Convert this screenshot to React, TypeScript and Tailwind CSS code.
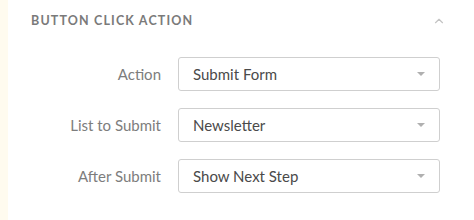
import { ChevronUp } from 'lucide-react'

const fields = [
  { label: 'Action', value: 'Submit Form' },
  { label: 'List to Submit', value: 'Newsletter' },
  { label: 'After Submit', value: 'Show Next Step' },
]

function Caret() {
  return (
    <svg width="8" height="4" viewBox="0 0 8 4" className="shrink-0">
      <path d="M0 0 L8 0 L4 4 Z" fill="#b0b0b0" />
    </svg>
  )
}

export default function App() {
  return (
    <div className="flex h-[220px] w-[474px] bg-white" style={{ fontFamily: 'Lato, "Open Sans", sans-serif' }}>
      <div className="w-[8px] shrink-0 bg-[#fffbef]" />
      <div className="flex-1">
        <div className="flex h-[42px] items-center justify-between pl-[23px] pr-[28px]">
          <span className="pt-[1px] text-[12.5px] font-bold tracking-[1.15px] text-[#7a7a7a]">BUTTON CLICK ACTION</span>
          <ChevronUp size={14} strokeWidth={2} className="text-[#c4c4c4]" />
        </div>
        <div className="mt-[15px] flex flex-col gap-[17px]">
          {fields.map((f) => (
            <div key={f.label} className="flex items-center">
              <div className="w-[153px] text-right text-[15px] text-[#7d7d7d]">{f.label}</div>
              <div className="ml-[17px] flex h-[34px] w-[262px] items-center justify-between rounded-[3px] border border-[#cfcfcf] pl-[14px] pr-[14px] text-[15px] text-[#4a4a4a]">
                <span>{f.value}</span>
                <Caret />
              </div>
            </div>
          ))}
        </div>
      </div>
    </div>
  )
}
